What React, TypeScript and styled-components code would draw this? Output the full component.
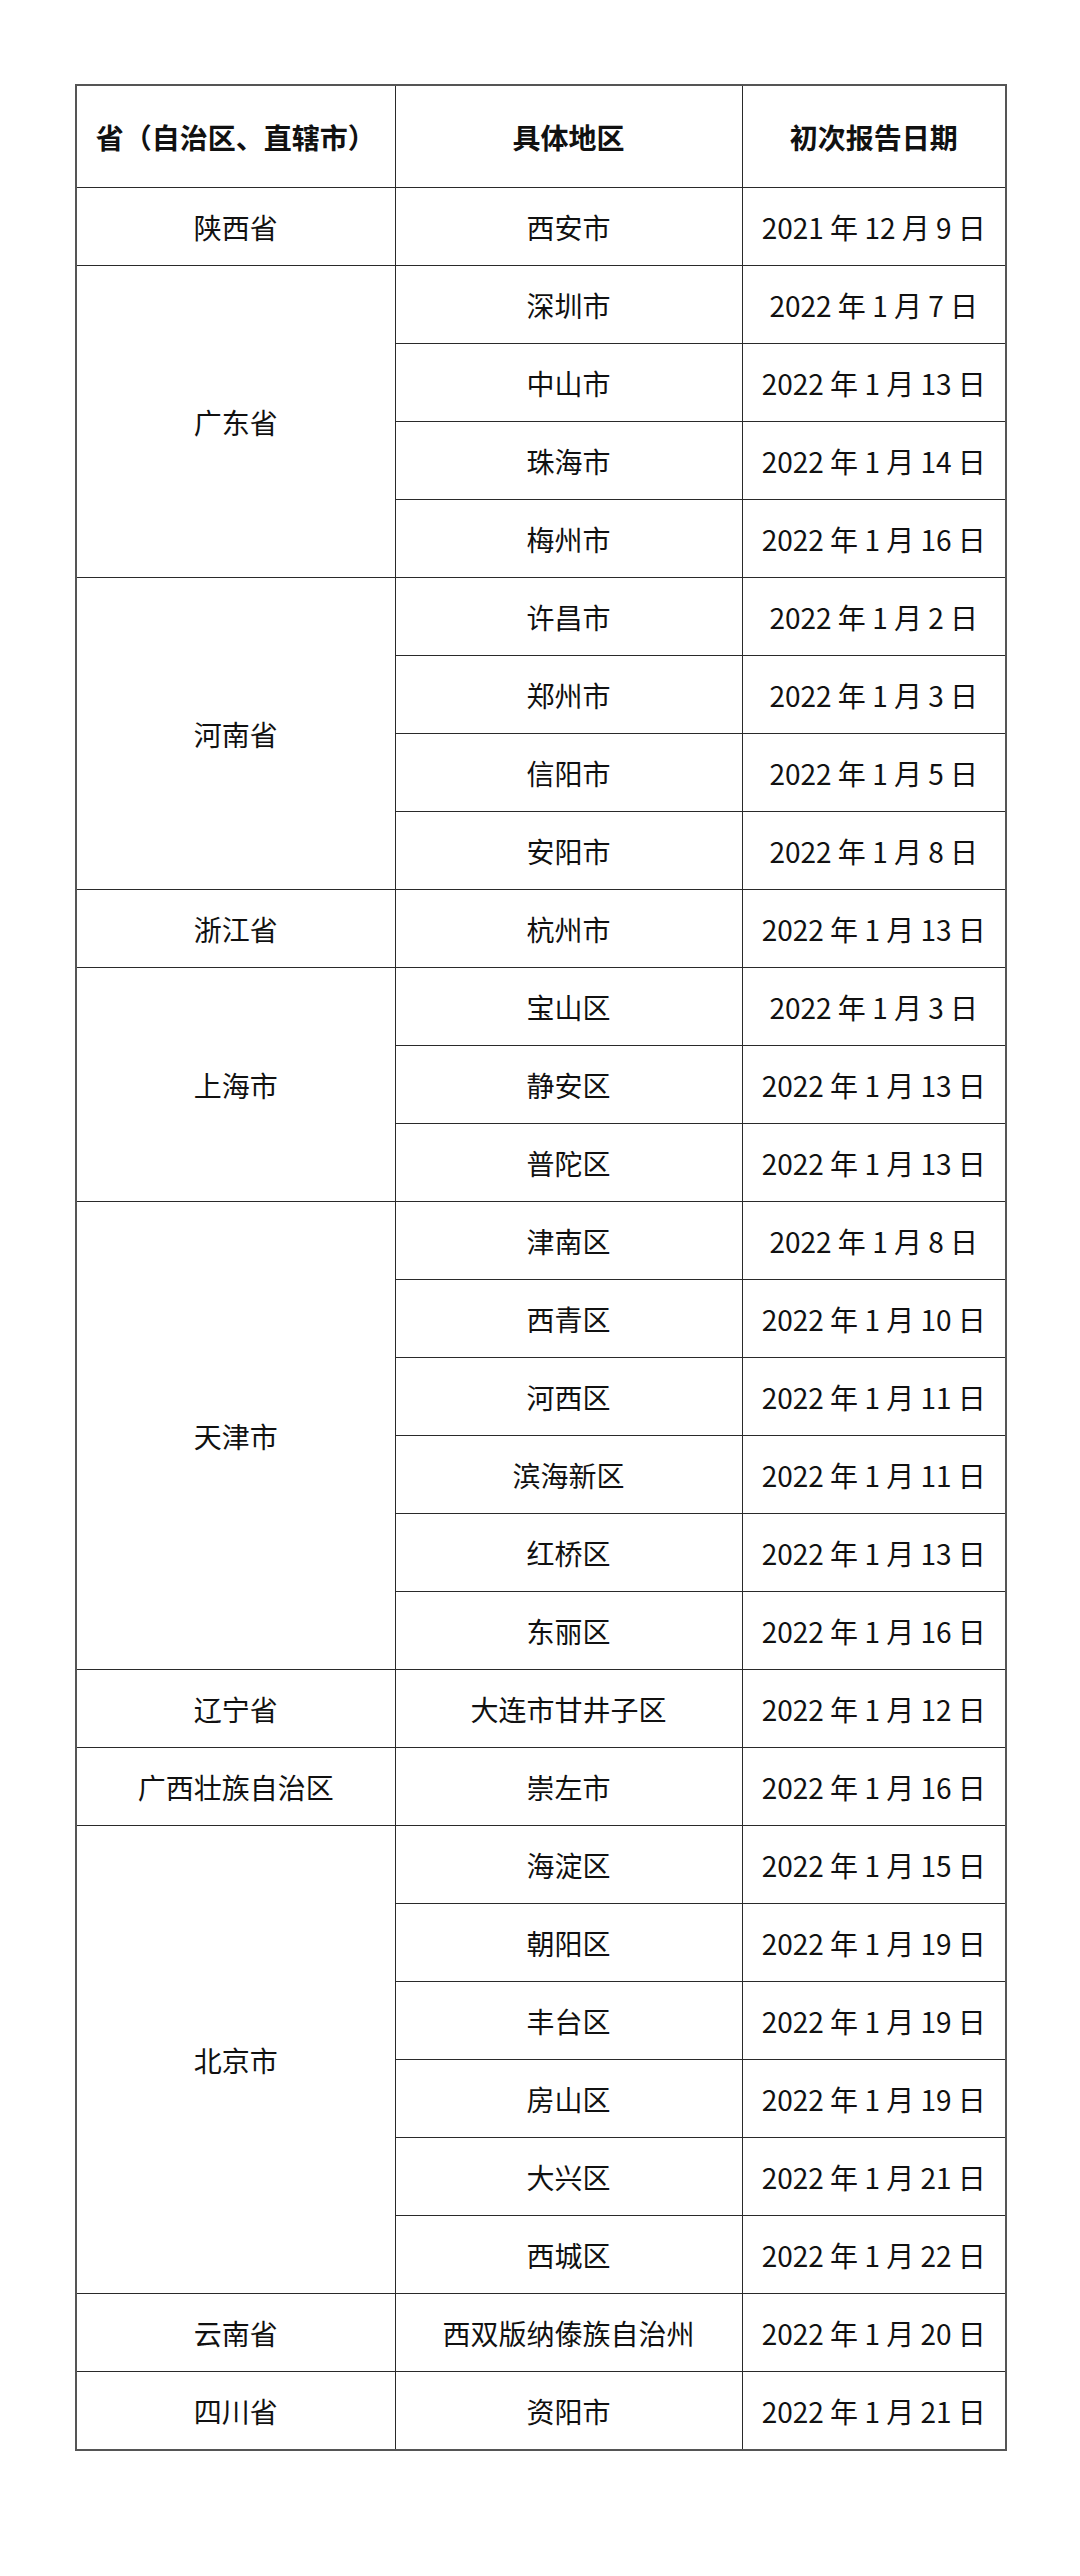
import React from "react";
import styled, { createGlobalStyle } from "styled-components";

const GlobalStyle = createGlobalStyle`
  html, body {
    margin: 0;
    padding: 0;
    background: #ffffff;
  }
  body {
    font-family: "Noto Sans CJK SC", "Noto Sans", sans-serif;
    color: #111111;
  }
`;

const Page = styled.div`
  width: 1080px;
  min-height: 2576px;
  padding: 84px 0 0 75px;
  box-sizing: border-box;
`;

const Table = styled.table`
  width: 930px;
  border-collapse: collapse;
  table-layout: fixed;
  border: 2px solid #555555;
`;

const HeadCell = styled.th`
  height: 101px;
  padding: 0;
  border: 1px solid #2a2a2a;
  font-size: 28px;
  font-weight: 700;
  text-align: center;
  vertical-align: middle;
  color: #111111;
`;

const Cell = styled.td`
  height: 77px;
  padding: 0;
  border: 1px solid #2a2a2a;
  font-size: 28px;
  font-weight: 400;
  text-align: center;
  vertical-align: middle;
  color: #111111;
  white-space: nowrap;
`;

type Group = { province: string; items: [string, string][] };

const data: Group[] = [
  { province: "陕西省", items: [["西安市", "2021 年 12 月 9 日"]] },
  {
    province: "广东省",
    items: [
      ["深圳市", "2022 年 1 月 7 日"],
      ["中山市", "2022 年 1 月 13 日"],
      ["珠海市", "2022 年 1 月 14 日"],
      ["梅州市", "2022 年 1 月 16 日"],
    ],
  },
  {
    province: "河南省",
    items: [
      ["许昌市", "2022 年 1 月 2 日"],
      ["郑州市", "2022 年 1 月 3 日"],
      ["信阳市", "2022 年 1 月 5 日"],
      ["安阳市", "2022 年 1 月 8 日"],
    ],
  },
  { province: "浙江省", items: [["杭州市", "2022 年 1 月 13 日"]] },
  {
    province: "上海市",
    items: [
      ["宝山区", "2022 年 1 月 3 日"],
      ["静安区", "2022 年 1 月 13 日"],
      ["普陀区", "2022 年 1 月 13 日"],
    ],
  },
  {
    province: "天津市",
    items: [
      ["津南区", "2022 年 1 月 8 日"],
      ["西青区", "2022 年 1 月 10 日"],
      ["河西区", "2022 年 1 月 11 日"],
      ["滨海新区", "2022 年 1 月 11 日"],
      ["红桥区", "2022 年 1 月 13 日"],
      ["东丽区", "2022 年 1 月 16 日"],
    ],
  },
  { province: "辽宁省", items: [["大连市甘井子区", "2022 年 1 月 12 日"]] },
  { province: "广西壮族自治区", items: [["崇左市", "2022 年 1 月 16 日"]] },
  {
    province: "北京市",
    items: [
      ["海淀区", "2022 年 1 月 15 日"],
      ["朝阳区", "2022 年 1 月 19 日"],
      ["丰台区", "2022 年 1 月 19 日"],
      ["房山区", "2022 年 1 月 19 日"],
      ["大兴区", "2022 年 1 月 21 日"],
      ["西城区", "2022 年 1 月 22 日"],
    ],
  },
  { province: "云南省", items: [["西双版纳傣族自治州", "2022 年 1 月 20 日"]] },
  { province: "四川省", items: [["资阳市", "2022 年 1 月 21 日"]] },
];

export default function App() {
  return (
    <>
      <GlobalStyle />
      <Page>
        <Table>
          <colgroup>
            <col style={{ width: 319 }} />
            <col style={{ width: 347 }} />
            <col style={{ width: 264 }} />
          </colgroup>
          <thead>
            <tr>
              <HeadCell>省（自治区、直辖市）</HeadCell>
              <HeadCell>具体地区</HeadCell>
              <HeadCell>初次报告日期</HeadCell>
            </tr>
          </thead>
          <tbody>
            {data.map((g) =>
              g.items.map(([area, date], i) => (
                <tr key={g.province + area}>
                  {i === 0 && <Cell rowSpan={g.items.length}>{g.province}</Cell>}
                  <Cell>{area}</Cell>
                  <Cell>{date}</Cell>
                </tr>
              ))
            )}
          </tbody>
        </Table>
      </Page>
    </>
  );
}
